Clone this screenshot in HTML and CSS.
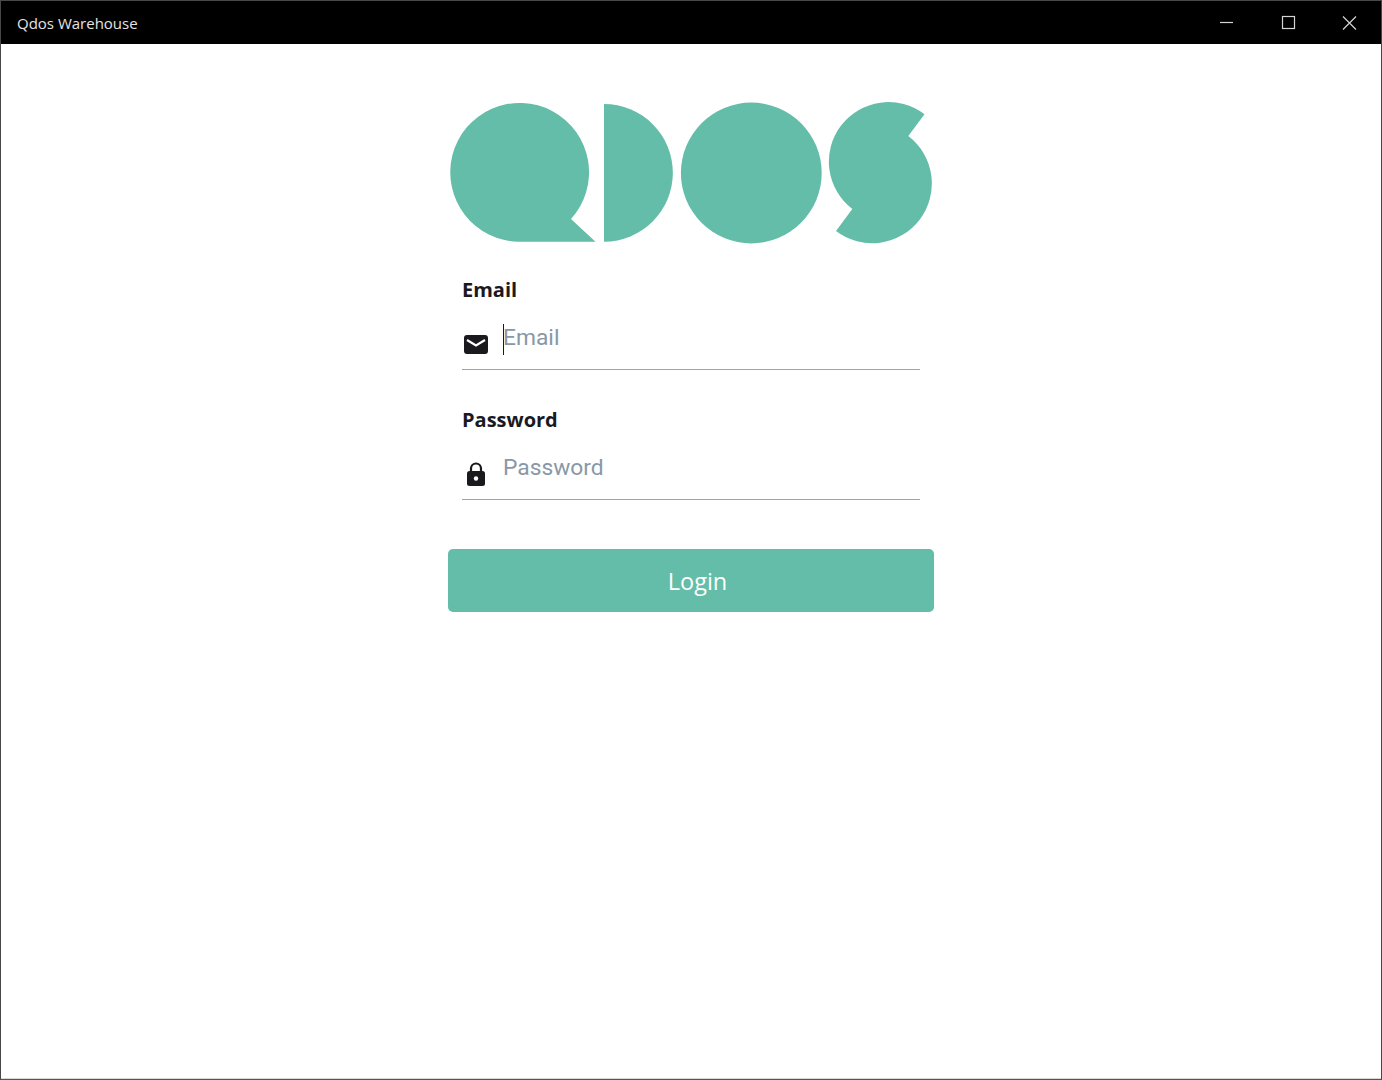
FILE: index.html
```html
<!DOCTYPE html>
<html>

<head>
	<title>Qdos Warehouse</title>
	<link rel="stylesheet" href="styles.css">
</head>

<body>
	<div class="window">
		<div class="titlebar">
			<span class="app-name">Qdos Warehouse</span>
			<div class="win-buttons">
				<svg class="win-btn" width="61" height="43" viewBox="0 0 61 43">
					<path d="M22 21.500H35" stroke="#d4d4d4" stroke-width="1.200" fill="none"/>
				</svg>
				<svg class="win-btn" width="61" height="43" viewBox="0 0 61 43">
					<rect x="23.500" y="15.500" width="12" height="12" stroke="#d4d4d4" stroke-width="1.200" fill="none"/>
				</svg>
				<svg class="win-btn" width="61" height="43" viewBox="0 0 61 43">
					<path d="M23 15.500L36 28.500M36 15.500L23 28.500" stroke="#d4d4d4" stroke-width="1.200" fill="none"/>
				</svg>
			</div>
		</div>

		<div class="content">
			<form class="login-form" onsubmit="event.preventDefault();">
				<svg class="logo" width="486" height="146" viewBox="448 100 486 146">
					<path fill="#64bda8" d="M519.2 241.7A69.4 69.4 0 1 1 571 219L595.5 241.7Z"/>
					<path fill="#64bda8" d="M604 104A68.850 68.850 0 0 1 604 241.700Z"/>
					<circle fill="#64bda8" cx="751.3" cy="173" r="70.4"/>
					<path fill="#64bda8" d="M924.5 114.3A59.5 59.5 0 0 0 852.3 209L836 231A59.5 59.5 0 0 0 908.3 136Z"/>
				</svg>

				<div class="field">
					<label class="field-label">Email</label>
					<div class="input-row">
						<svg class="field-icon" width="24" height="24" viewBox="0 0 24 24">
							<rect x="0" y="3" width="24" height="19" rx="3" fill="#1a1a1e"/>
							<path d="M3 8L12 13.500L21 8" stroke="#fff" stroke-width="2.200" fill="none"/>
						</svg>
						<input class="field-input" type="text" placeholder="Email">
						<span class="caret"></span>
					</div>
				</div>

				<div class="field">
					<label class="field-label">Password</label>
					<div class="input-row">
						<svg class="field-icon" width="24" height="24" viewBox="0 0 24 24">
							<path d="M7 10V6.500A5 5 0 0 1 17 6.500V10" stroke="#1a1a1e" stroke-width="2.200" fill="none"/>
							<rect x="3" y="9" width="18" height="15" rx="2.500" fill="#1a1a1e"/>
							<circle cx="12" cy="16.500" r="2.200" fill="#fff"/>
						</svg>
						<input class="field-input" type="password" placeholder="Password">
					</div>
				</div>

				<button class="login-btn" type="submit">Login</button>
			</form>
		</div>
	</div>
</body>

</html>
```

FILE: styles.css
```css
html, body {
	margin: 0;
	padding: 0;
	background-color: white;
}

.window {
	height: 1080px;
	box-sizing: border-box;
	border: 1px solid #484848;
	border-bottom-color: #555;
	display: flex;
	flex-direction: column;
	font-family: "Open Sans", "Noto Sans", sans-serif;
}

.titlebar {
	height: 43px;
	background-color: black;
	display: flex;
	align-items: center;
	justify-content: space-between;
	flex-shrink: 0;
}

.app-name {
	color: #e4e4e4;
	font-size: 15px;
	margin-left: 16px;
}

.win-buttons {
	display: flex;
}

.win-btn {
	display: block;
}

.content {
	flex: 1;
	border-bottom: 1px solid #d8d8d8;
}

.login-form {
	width: 486px;
	margin: 56px 0 0 447px;
	display: flex;
	flex-direction: column;
}

.logo {
	display: block;
}

.field {
	margin: 30px 14px 0 14px;
}

.field + .field {
	margin-top: 36px;
}

.field-label {
	display: block;
	font-size: 20px;
	font-weight: 700;
	line-height: 28px;
	color: #1a1a1e;
}

.input-row {
	position: relative;
	display: flex;
	align-items: flex-end;
	height: 58px;
	margin-top: 7px;
	border-bottom: 1px solid #9da3ae;
}

.field-icon {
	display: block;
	margin: 0 15px 13px 2px;
	flex-shrink: 0;
}

.field-input {
	flex: 1;
	min-width: 0;
	border: none;
	outline: none;
	padding: 0;
	height: 40px;
	margin-bottom: 12px;
	font-family: Roboto, "Open Sans", sans-serif;
	font-size: 22.800px;
	background: transparent;
}

.field-input::placeholder {
	color: #8898a6;
	opacity: 1;
}

.caret {
	position: absolute;
	left: 41px;
	top: 13px;
	width: 1px;
	height: 31px;
	background-color: #1a1a1e;
}

.login-btn {
	margin-top: 49px;
	height: 63px;
	border: none;
	border-radius: 5px;
	background-color: #64bda8;
	color: white;
	font-family: inherit;
	font-size: 23.500px;
	padding: 0 0 0 13px;
}
```
